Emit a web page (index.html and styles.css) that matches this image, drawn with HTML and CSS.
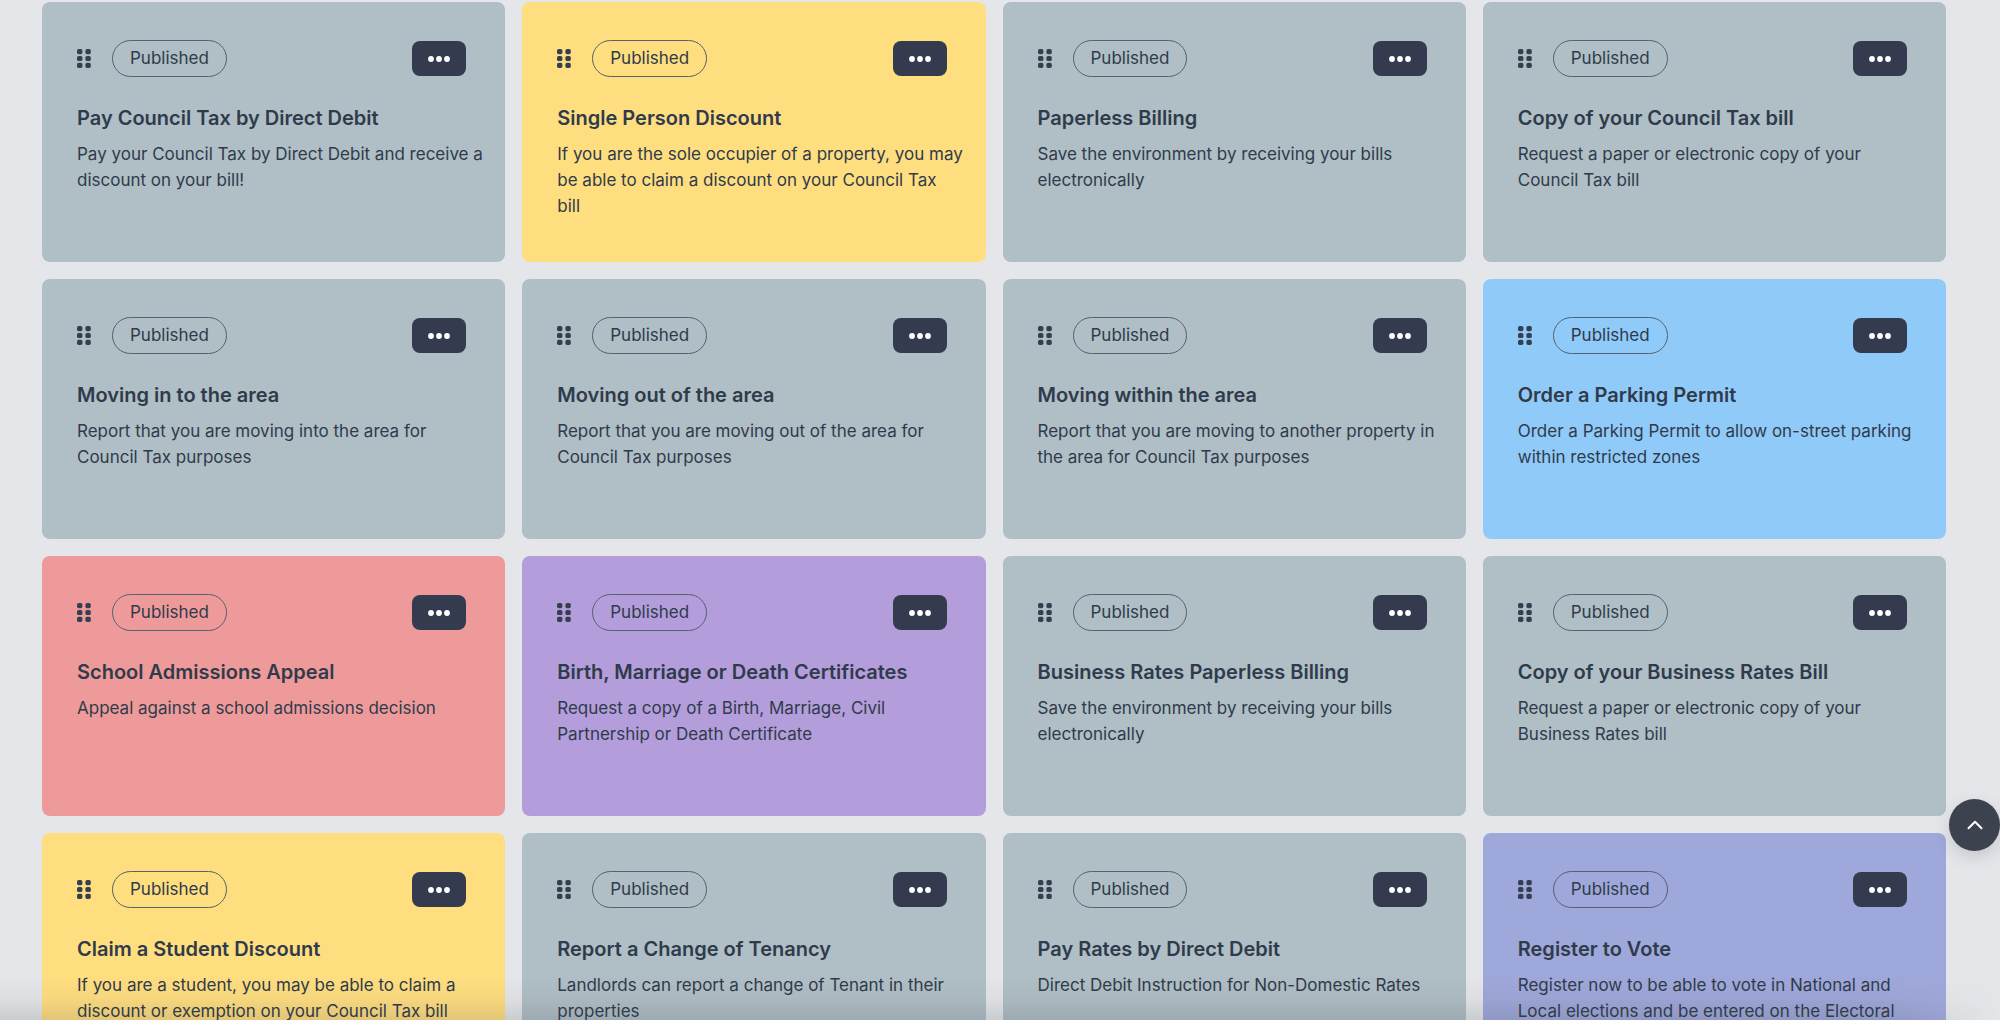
FILE: index.html
```html
<!DOCTYPE html>
<html lang="en">
<head>
<meta charset="utf-8">
<title>Services</title>
<link rel="stylesheet" href="styles.css">
</head>
<body>
<svg class="sprite" aria-hidden="true">
  <symbol id="grip" viewBox="0 0 14 19">
    <rect x="0" y="0" width="5.4" height="5.2" rx="1.7"/><rect x="8.4" y="0" width="5.4" height="5.2" rx="1.7"/>
    <rect x="0" y="6.9" width="5.4" height="5.2" rx="1.7"/><rect x="8.4" y="6.9" width="5.4" height="5.2" rx="1.7"/>
    <rect x="0" y="13.8" width="5.4" height="5.2" rx="1.7"/><rect x="8.4" y="13.8" width="5.4" height="5.2" rx="1.7"/>
  </symbol>
  <symbol id="dots" viewBox="0 0 22 6">
    <circle cx="3" cy="3" r="2.9"/><circle cx="11" cy="3" r="2.9"/><circle cx="19" cy="3" r="2.9"/>
  </symbol>
</svg>
<main class="board">
  <article class="card">
    <header class="bar"><svg class="grip"><use href="#grip"/></svg><span class="status">Published</span><button class="more" type="button" aria-label="More actions"><svg class="dots"><use href="#dots"/></svg></button></header>
    <h2 class="title">Pay Council Tax by Direct Debit</h2>
    <p class="text">Pay your Council Tax by Direct Debit and receive a discount on your bill!</p>
  </article>
  <article class="card yellow">
    <header class="bar"><svg class="grip"><use href="#grip"/></svg><span class="status">Published</span><button class="more" type="button" aria-label="More actions"><svg class="dots"><use href="#dots"/></svg></button></header>
    <h2 class="title">Single Person Discount</h2>
    <p class="text">If you are the sole occupier of a property, you may be able to claim a discount on your Council Tax<br>bill</p>
  </article>
  <article class="card">
    <header class="bar"><svg class="grip"><use href="#grip"/></svg><span class="status">Published</span><button class="more" type="button" aria-label="More actions"><svg class="dots"><use href="#dots"/></svg></button></header>
    <h2 class="title">Paperless Billing</h2>
    <p class="text">Save the environment by receiving your bills electronically</p>
  </article>
  <article class="card">
    <header class="bar"><svg class="grip"><use href="#grip"/></svg><span class="status">Published</span><button class="more" type="button" aria-label="More actions"><svg class="dots"><use href="#dots"/></svg></button></header>
    <h2 class="title">Copy of your Council Tax bill</h2>
    <p class="text">Request a paper or electronic copy of your Council Tax bill</p>
  </article>
  <article class="card">
    <header class="bar"><svg class="grip"><use href="#grip"/></svg><span class="status">Published</span><button class="more" type="button" aria-label="More actions"><svg class="dots"><use href="#dots"/></svg></button></header>
    <h2 class="title">Moving in to the area</h2>
    <p class="text">Report that you are moving into the area for Council Tax purposes</p>
  </article>
  <article class="card">
    <header class="bar"><svg class="grip"><use href="#grip"/></svg><span class="status">Published</span><button class="more" type="button" aria-label="More actions"><svg class="dots"><use href="#dots"/></svg></button></header>
    <h2 class="title">Moving out of the area</h2>
    <p class="text">Report that you are moving out of the area for Council Tax purposes</p>
  </article>
  <article class="card">
    <header class="bar"><svg class="grip"><use href="#grip"/></svg><span class="status">Published</span><button class="more" type="button" aria-label="More actions"><svg class="dots"><use href="#dots"/></svg></button></header>
    <h2 class="title">Moving within the area</h2>
    <p class="text">Report that you are moving to another property in the area for Council Tax purposes</p>
  </article>
  <article class="card blue">
    <header class="bar"><svg class="grip"><use href="#grip"/></svg><span class="status">Published</span><button class="more" type="button" aria-label="More actions"><svg class="dots"><use href="#dots"/></svg></button></header>
    <h2 class="title">Order a Parking Permit</h2>
    <p class="text">Order a Parking Permit to allow on-street parking within restricted zones</p>
  </article>
  <article class="card red">
    <header class="bar"><svg class="grip"><use href="#grip"/></svg><span class="status">Published</span><button class="more" type="button" aria-label="More actions"><svg class="dots"><use href="#dots"/></svg></button></header>
    <h2 class="title">School Admissions Appeal</h2>
    <p class="text">Appeal against a school admissions decision</p>
  </article>
  <article class="card purple">
    <header class="bar"><svg class="grip"><use href="#grip"/></svg><span class="status">Published</span><button class="more" type="button" aria-label="More actions"><svg class="dots"><use href="#dots"/></svg></button></header>
    <h2 class="title">Birth, Marriage or Death Certificates</h2>
    <p class="text">Request a copy of a Birth, Marriage, Civil Partnership or Death Certificate</p>
  </article>
  <article class="card">
    <header class="bar"><svg class="grip"><use href="#grip"/></svg><span class="status">Published</span><button class="more" type="button" aria-label="More actions"><svg class="dots"><use href="#dots"/></svg></button></header>
    <h2 class="title">Business Rates Paperless Billing</h2>
    <p class="text">Save the environment by receiving your bills electronically</p>
  </article>
  <article class="card">
    <header class="bar"><svg class="grip"><use href="#grip"/></svg><span class="status">Published</span><button class="more" type="button" aria-label="More actions"><svg class="dots"><use href="#dots"/></svg></button></header>
    <h2 class="title">Copy of your Business Rates Bill</h2>
    <p class="text">Request a paper or electronic copy of your Business Rates bill</p>
  </article>
  <article class="card yellow">
    <header class="bar"><svg class="grip"><use href="#grip"/></svg><span class="status">Published</span><button class="more" type="button" aria-label="More actions"><svg class="dots"><use href="#dots"/></svg></button></header>
    <h2 class="title">Claim a Student Discount</h2>
    <p class="text">If you are a student, you may be able to claim a discount or exemption on your Council Tax bill</p>
  </article>
  <article class="card">
    <header class="bar"><svg class="grip"><use href="#grip"/></svg><span class="status">Published</span><button class="more" type="button" aria-label="More actions"><svg class="dots"><use href="#dots"/></svg></button></header>
    <h2 class="title">Report a Change of Tenancy</h2>
    <p class="text">Landlords can report a change of Tenant in their properties</p>
  </article>
  <article class="card">
    <header class="bar"><svg class="grip"><use href="#grip"/></svg><span class="status">Published</span><button class="more" type="button" aria-label="More actions"><svg class="dots"><use href="#dots"/></svg></button></header>
    <h2 class="title">Pay Rates by Direct Debit</h2>
    <p class="text">Direct Debit Instruction for Non-Domestic Rates</p>
  </article>
  <article class="card indigo">
    <header class="bar"><svg class="grip"><use href="#grip"/></svg><span class="status">Published</span><button class="more" type="button" aria-label="More actions"><svg class="dots"><use href="#dots"/></svg></button></header>
    <h2 class="title">Register to Vote</h2>
    <p class="text">Register now to be able to vote in National and Local elections and be entered on the Electoral</p>
  </article>
</main>
<div class="fade"></div>
<button class="to-top" type="button" aria-label="Back to top"><svg class="chevron" viewBox="0 0 16 10"><path d="M1.500 8.300 8 1.800l6.500 6.500"/></svg></button>
</body>
</html>
```

FILE: styles.css
```css
* { box-sizing: border-box; }

body {
  height: 100vh;
  margin: 0;
  overflow: hidden;
  background: #e4e6ea;
  color: #2f3b4b;
  font-family: Inter, "Liberation Sans", sans-serif;
  font-size: 17px;
  line-height: 26px;
}

.sprite { display: none; }

.board {
  display: grid;
  grid-template-columns: repeat(4, minmax(0, 1fr));
  grid-auto-rows: minmax(260px, auto);
  gap: 17px;
  padding: 2px 54px 17px 42px;
}

.card {
  padding: 38px 20px 34px 35px;
  border-radius: 8px;
  background: #b0bec5;
}
.yellow { background: #ffde80; }
.blue { background: #90caf9; }
.red { background: #ef9a9a; }
.purple { background: #b39ddb; }
.indigo { background: #9fa8da; }

.bar {
  display: flex;
  align-items: center;
  padding-right: 19px;
}

.grip {
  width: 14px;
  height: 19px;
  margin-right: 21px;
  fill: #343f4f;
}

.status {
  padding: 5px 17px;
  border: 1px solid #55616f;
  border-radius: 19px;
  line-height: 25px;
}

.more {
  display: flex;
  align-items: center;
  justify-content: center;
  width: 54px;
  height: 35px;
  margin-left: auto;
  padding: 0;
  border: 0;
  border-radius: 8px;
  background: #343b4e;
}

.dots {
  width: 22px;
  height: 6px;
  fill: #fff;
}

.title {
  margin: 26px 0 8px;
  font-size: 20px;
  font-weight: 600;
  line-height: 30px;
}

.text { margin: 0; }

.fade {
  position: fixed;
  right: 0;
  bottom: 0;
  left: 0;
  height: 44px;
  background: linear-gradient(rgba(60, 60, 65, 0), rgba(60, 60, 65, 0.04) 50%, rgba(60, 60, 65, 0.15));
  mask-image: linear-gradient(to right, #000 94%, transparent);
  pointer-events: none;
}

.to-top {
  position: fixed;
  right: 0;
  bottom: 169px;
  display: flex;
  align-items: center;
  justify-content: center;
  width: 51px;
  height: 52px;
  padding: 0;
  border: 0;
  border-radius: 50%;
  background: #3c424e;
  box-shadow: 0 6px 16px rgba(60, 66, 78, 0.18);
}

.chevron {
  width: 16px;
  height: 10px;
  fill: none;
  stroke: #fff;
  stroke-width: 2;
  stroke-linecap: round;
  stroke-linejoin: round;
}
```
